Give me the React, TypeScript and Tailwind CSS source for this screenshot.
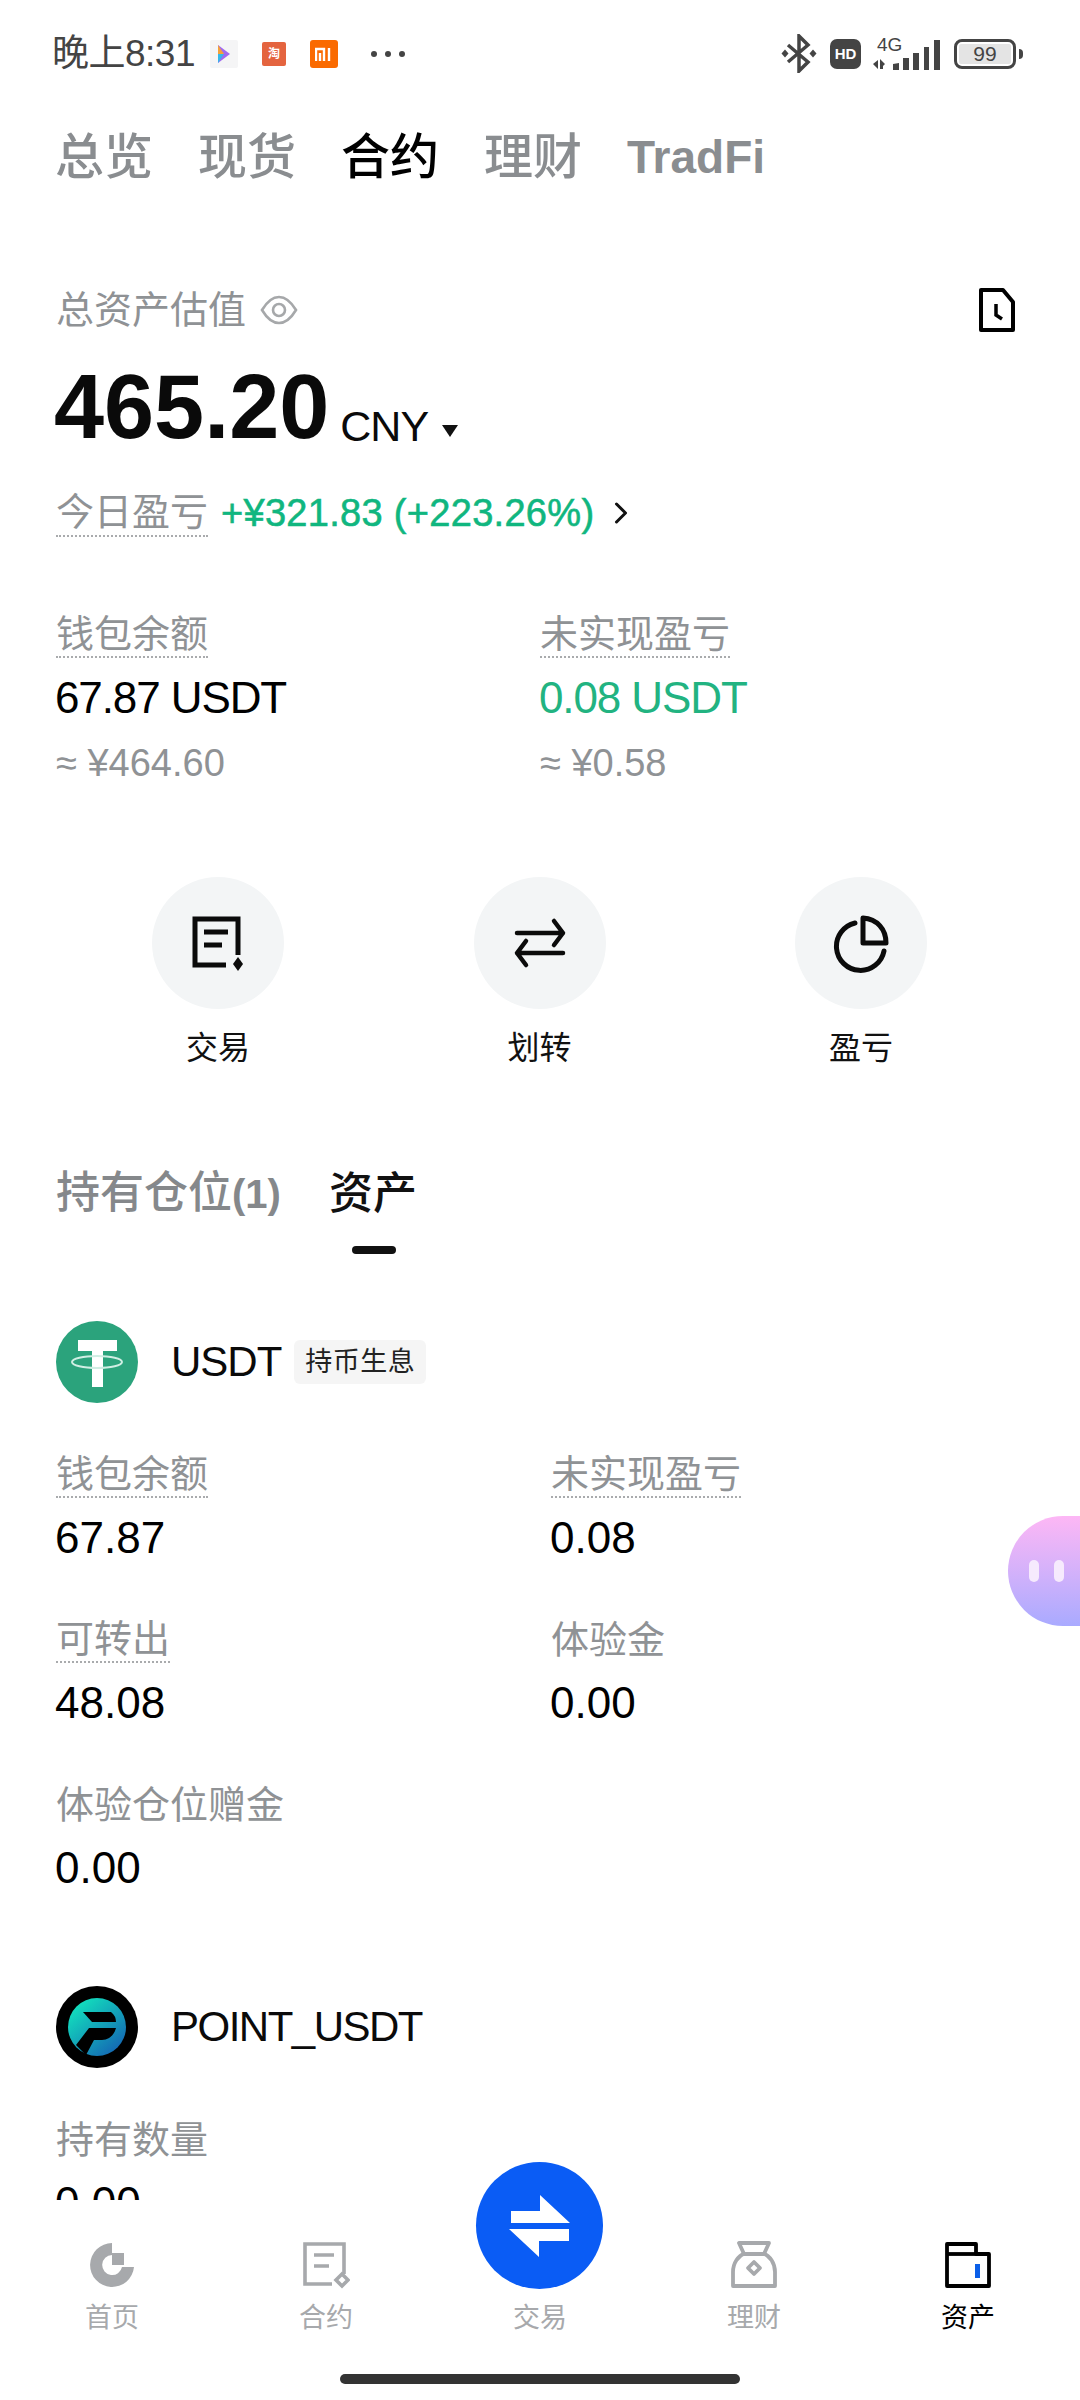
import React from 'react';
import { ChevronRight } from 'lucide-react';

const font = { fontFamily: '"Liberation Sans", "Noto Sans CJK SC", sans-serif' };

const Label: React.FC<{ text: string; dotted?: boolean }> = ({ text, dotted }) => (
  <div className="flex h-[46px] items-center">
    <span className={`text-[38px] leading-[44px] text-[#8f9295] ${dotted ? 'border-b-2 border-dotted border-[#a9abad]' : ''}`}>{text}</span>
  </div>
);

const Cell: React.FC<{ label: string; value: string; dotted?: boolean }> = ({ label, value, dotted }) => (
  <div className="h-[165px]">
    <Label text={label} dotted={dotted} />
    <div className="-ml-[1px] mt-[15px] text-[44px] leading-[50px] text-black">{value}</div>
  </div>
);

const Eye = () => (
  <svg width="38" height="30" viewBox="0 0 38 30" fill="none" stroke="#a6a8aa" strokeWidth="2.6">
    <path d="M2 15C8 5 14 2 19 2s11 3 17 13c-6 10-12 13-17 13S8 25 2 15Z" />
    <circle cx="19" cy="15" r="6" />
  </svg>
);

const TradeIcon = () => (
  <svg width="60" height="60" viewBox="0 0 60 60" fill="none">
    <path d="M38 52H7V6h43v36" stroke="#0b0b0b" strokeWidth="5" />
    <path d="M16 19h24M16 32h18" stroke="#0b0b0b" strokeWidth="5" />
    <path d="M50 44l5 7-5 7-5-7z" fill="#0b0b0b" />
  </svg>
);

const TransferIcon = () => (
  <svg width="60" height="60" viewBox="0 0 60 60" fill="none" stroke="#0b0b0b" strokeWidth="4.5" strokeLinecap="round" strokeLinejoin="round">
    <path d="M7 20h46l-9-12M53 20l-9 12" />
    <path d="M53 40H7l9-12M7 40l9 12" />
  </svg>
);

const PieIcon = () => (
  <svg width="60" height="60" viewBox="0 0 60 60" fill="none" stroke="#0b0b0b" strokeWidth="5">
    <path d="M24 10a24 24 0 1 0 29 28" strokeLinecap="round" />
    <path d="M32 5v25h23C55 16 46 6 32 5Z" strokeLinejoin="round" />
  </svg>
);

const Action: React.FC<{ label: string; children: React.ReactNode }> = ({ label, children }) => (
  <div className="flex w-[132px] flex-col items-center">
    <div className="flex h-[132px] w-[132px] items-center justify-center rounded-full bg-[#f3f5f6]">{children}</div>
    <div className="mt-[17px] whitespace-nowrap text-[32px] leading-[44px] text-[#111]">{label}</div>
  </div>
);

const Tether = () => (
  <svg width="82" height="82" viewBox="0 0 82 82" className="shrink-0">
    <circle cx="41" cy="41" r="41" fill="#2ba37c" />
    <path d="M22 19h39v11H47v36H36V30H22z" fill="#fff" />
    <ellipse cx="41" cy="41" rx="25" ry="6" fill="none" stroke="#cfeee3" strokeWidth="2" />
  </svg>
);

const PointLogo = () => (
  <svg width="82" height="82" viewBox="0 0 82 82" className="shrink-0">
    <defs>
      <linearGradient id="pt" x1="0.150" y1="0.100" x2="0.850" y2="0.900">
        <stop offset="0" stopColor="#12e0bd" />
        <stop offset="1" stopColor="#1469b4" />
      </linearGradient>
    </defs>
    <circle cx="41" cy="41" r="41" fill="#000" />
    <circle cx="41" cy="41" r="29" fill="url(#pt)" />
    <path d="M27 26h28q5 4 5 10H36z" fill="#000" />
    <path d="M20 59l13-17h27c-2 8-8 12-14 12h-8l-8 15z" fill="#000" />
  </svg>
);

const HomeIcon = () => (
  <svg width="48" height="48" viewBox="0 0 48 48">
    <path d="M24 2v12a10 10 0 1 0 10 12h12A22 22 0 1 1 24 2Z" fill="#a7a9ac" />
    <rect x="24" y="12" width="12" height="12" fill="#a7a9ac" />
  </svg>
);

const ContractIcon = () => (
  <svg width="48" height="48" viewBox="0 0 48 48" fill="none" stroke="#a7a9ac" strokeWidth="3.600">
    <path d="M30 43H3V3h39v30" />
    <path d="M12 14h20M12 25h15" />
    <path d="M40 34l6 6-6 6-6-6z" transform="translate(0 -1)" />
  </svg>
);

const EarnIcon = () => (
  <svg width="48" height="48" viewBox="0 0 48 48" fill="none" stroke="#a7a9ac" strokeWidth="3.800" strokeLinejoin="round">
    <path d="M9 2h30l-5 11H14z" />
    <path d="M15 12C8 15 3 22 3 31v14h42V31c0-9-5-16-12-19" />
    <path d="M24 21l6 6-6 6-6-6z" />
  </svg>
);

const WalletIcon = () => (
  <svg width="46" height="46" viewBox="0 0 46 46" fill="none">
    <path d="M2 44V2h29v10h13v32z" stroke="#000" strokeWidth="3.800" strokeLinejoin="round" />
    <path d="M2 12h29" stroke="#000" strokeWidth="3.800" />
    <rect x="30" y="22" width="5" height="14" fill="#0b5fe8" />
  </svg>
);

const NavItem: React.FC<{ label: string; active?: boolean; children?: React.ReactNode }> = ({ label, active, children }) => (
  <div className="flex w-[214px] flex-col items-center">
    <div className="flex h-[48px] items-center justify-center">{children}</div>
    <div className={`mt-[11px] text-[27px] leading-[36px] ${active ? 'text-black' : 'text-[#a7a9ac]'}`}>{label}</div>
  </div>
);

const StatusBar = () => (
  <div className="flex h-[106px] items-center justify-between pl-[52px] pr-[57px] pt-[1px]">
    <div className="flex items-center">
      <span className="text-[37px] leading-[44px] tracking-[-0.5px] text-[#444]">晚上8:31</span>
      <svg width="28" height="28" viewBox="0 0 28 28" className="ml-[15px]">
        <rect width="28" height="28" rx="2" fill="#f5f5f6" />
        <path d="M8 5l12 9-12 9z" fill="#a06af0" />
        <path d="M8 5l6 9H8z" fill="#f5a13a" />
        <path d="M8 14h6l-6 9z" fill="#35b8e8" />
      </svg>
      <span className="ml-[24px] flex h-[24px] w-[24px] items-center justify-center rounded-[2px] bg-[#e4643f] text-[12px] font-bold leading-none text-white">淘</span>
      <span className="ml-[24px] flex h-[28px] w-[28px] items-center justify-center rounded-[3px] bg-[#fa6a00]">
        <svg width="18" height="14" viewBox="0 0 18 14" fill="none" stroke="#fff" strokeWidth="2.400">
          <path d="M1 14V2h8v12M5 6v8M14 1v13" />
        </svg>
      </span>
      <span className="ml-[33px] flex gap-[8px]">
        <i className="h-[6px] w-[6px] rounded-full bg-[#444]" />
        <i className="h-[6px] w-[6px] rounded-full bg-[#444]" />
        <i className="h-[6px] w-[6px] rounded-full bg-[#444]" />
      </span>
    </div>
    <div className="flex items-center">
      <svg width="36" height="39" viewBox="0 0 36 39" fill="none" stroke="#444" strokeWidth="3.500">
        <path d="M7 11l20 17-9 9V2l9 9L7 28" />
        <path d="M4 15.500l3.500 4-3.500 4-3.500-4zM32 15.500l3.500 4-3.500 4-3.500-4z" fill="#444" stroke="none" />
      </svg>
      <span className="ml-[13px] flex h-[30px] w-[31px] items-center justify-center rounded-[7px] bg-[#444] text-[15px] font-bold leading-none text-white">HD</span>
      <div className="relative ml-[12px] h-[32px] w-[67px]">
        <span className="absolute left-[4px] top-[-2px] text-[19px] leading-[18px] text-[#444]">4G</span>
        <svg width="67" height="32" viewBox="0 0 67 32" fill="#444">
          <path d="M0 26l5-4v9zM7 21l5 5-2 2v3H7zM20 32v-6l6-1v7z" />
          <rect x="20" y="26" width="6" height="6" />
          <rect x="30" y="20" width="6" height="12" />
          <rect x="40" y="15" width="6" height="17" />
          <rect x="51" y="9" width="5" height="23" />
          <rect x="61" y="2" width="6" height="30" />
        </svg>
      </div>
      <div className="ml-[14px] flex h-[30px] w-[62px] items-center justify-center rounded-[8px] border-[3px] border-[#444] p-[2px]">
        <span className="flex h-full w-full items-center justify-center rounded-[2px] bg-[#e4e4e4] text-[21px] leading-none text-[#444]">99</span>
      </div>
      <i className="ml-[3px] h-[10px] w-[4px] rounded-r bg-[#444]" />
    </div>
  </div>
);

export default function App() {
  const tabs = ['总览', '现货', '合约', '理财'];

  return (
    <div className="relative flex h-[2400px] w-[1080px] flex-col overflow-hidden bg-white" style={font}>
      <div className="h-[2200px] overflow-hidden">
        <StatusBar />

        {/* top tabs */}
        <div className="mt-[1px] flex h-[100px] items-center gap-[45px] px-[55px]">
          {tabs.map((t) => (
            <span key={t} className={`text-[49px] font-medium leading-[56px] ${t === '合约' ? 'text-black' : 'text-[#8a8d90]'}`}>{t}</span>
          ))}
          <span className="text-[46px] font-bold leading-[56px] text-[#8a8d90]">TradFi</span>
        </div>

        {/* total */}
        <div className="mt-[80px] flex h-[46px] items-center justify-between pl-[56px] pr-[56px]">
          <div className="flex items-center gap-[14px]">
            <span className="text-[38px] leading-[44px] text-[#8f9295]">总资产估值</span>
            <Eye />
          </div>
          <svg width="38" height="44" viewBox="0 0 38 44" fill="none" stroke="#000" strokeWidth="4" className="mr-[8px]">
            <path d="M3 2h22l10 12v28H3z" strokeLinejoin="round" />
            <path d="M18 16v11l6 4" strokeWidth="3.500" />
          </svg>
        </div>
        <div className="mt-[28px] flex h-[92px] items-end pl-[54px]">
          <span className="text-[90px] font-bold leading-[92px] text-[#0a0a0a]">465.20</span>
          <span className="mb-[2px] ml-[11px] text-[43px] leading-[50px] tracking-[-1px] text-[#0a0a0a]">CNY</span>
          <svg width="16" height="12" viewBox="0 0 16 12" className="mb-[16px] ml-[14px]">
            <path d="M0 0h16L8 12z" fill="#111" />
          </svg>
        </div>
        <div className="mt-[35px] flex h-[50px] items-center pl-[56px]">
          <span className="border-b-2 border-dotted border-[#a9abad] text-[38px] leading-[46px] text-[#8f9295]">今日盈亏</span>
          <span className="ml-[13px] text-[38px] leading-[44px] tracking-[0.3px] text-[#10b67f] [-webkit-text-stroke:0.6px_#10b67f]">+¥321.83 (+223.26%)</span>
          <ChevronRight size={36} color="#111" strokeWidth={2} className="ml-[9px]" />
        </div>

        {/* balances */}
        <div className="mt-[74px] grid grid-cols-[484px_1fr] px-[56px]">
          <div>
            <Label text="钱包余额" dotted />
            <div className="-ml-[1px] mt-[15px] text-[44px] leading-[50px] tracking-[-1.1px] text-black">67.87 USDT</div>
            <div className="mt-[18px] text-[38px] leading-[44px] text-[#8f9295]">≈ ¥464.60</div>
          </div>
          <div>
            <Label text="未实现盈亏" dotted />
            <div className="-ml-[1px] mt-[15px] text-[44px] leading-[50px] tracking-[-1.1px] text-[#22b381]">0.08 USDT</div>
            <div className="mt-[18px] text-[38px] leading-[44px] text-[#8f9295]">≈ ¥0.58</div>
          </div>
        </div>

        {/* actions */}
        <div className="mt-[92px] flex justify-between pl-[152px] pr-[153px]">
          <Action label="交易"><TradeIcon /></Action>
          <Action label="划转"><TransferIcon /></Action>
          <Action label="盈亏"><PieIcon /></Action>
        </div>

        {/* position tabs */}
        <div className="mt-[95px] flex items-center pl-[56px]">
          <span className="text-[44px] font-medium leading-[56px] text-[#85888b]">持有仓位<span className="text-[40px] font-bold">(1)</span></span>
          <span className="ml-[48px] text-[44px] font-medium leading-[56px] text-[#111]">资产</span>
        </div>
        <div className="ml-[352px] mt-[24px] h-[8px] w-[44px] rounded-full bg-[#111]" />

        {/* USDT */}
        <div className="mt-[67px] flex items-center pl-[56px]">
          <Tether />
          <span className="ml-[33px] text-[42px] leading-[50px] tracking-[-1px] text-[#0a0a0a]">USDT</span>
          <span className="ml-[13px] flex h-[44px] w-[132px] items-center justify-center rounded-[6px] bg-[#f5f5f5] text-[27px] leading-none tracking-[0.5px] text-[#222]">持币生息</span>
        </div>
        <div className="mt-[49px] grid grid-cols-[495px_1fr] px-[56px]">
          <Cell label="钱包余额" value="67.87" dotted />
          <Cell label="未实现盈亏" value="0.08" dotted />
          <Cell label="可转出" value="48.08" dotted />
          <Cell label="体验金" value="0.00" />
          <Cell label="体验仓位赠金" value="0.00" />
        </div>

        {/* POINT_USDT */}
        <div className="mt-[39px] flex items-center pl-[56px]">
          <PointLogo />
          <span className="ml-[33px] text-[42px] leading-[50px] tracking-[-1.5px] text-[#0a0a0a]">POINT_USDT</span>
        </div>
        <div className="mt-[49px] px-[56px]">
          <Cell label="持有数量" value="0.00" />
        </div>
      </div>

      {/* bottom nav */}
      <div className="relative h-[200px] bg-white">
        <div className="flex pl-[5px] pt-[41px]">
          <NavItem label="首页"><HomeIcon /></NavItem>
          <NavItem label="合约"><ContractIcon /></NavItem>
          <NavItem label="交易" />
          <NavItem label="理财"><EarnIcon /></NavItem>
          <NavItem label="资产" active><WalletIcon /></NavItem>
        </div>
        <div className="mx-auto mt-[38px] h-[10px] w-[400px] rounded-full bg-[#333]" />
        <div className="absolute left-[476px] top-[-38px] flex h-[127px] w-[127px] items-center justify-center rounded-full bg-[#0a5cf5]">
          <svg width="64" height="62" viewBox="0 0 64 62" fill="#fff">
            <path d="M3 17h29V1l30 28H3z" transform="translate(0 -1)" />
            <path d="M61 33H1l30 28V45h30z" transform="translate(0 1)" />
          </svg>
        </div>
      </div>

      {/* floating assistant */}
      <div className="absolute left-[1008px] top-[1516px] flex h-[110px] w-[72px] items-center gap-[15px] rounded-l-full bg-gradient-to-b from-[#fdb7f5] to-[#a9aaff] pl-[21px]">
        <i className="h-[22px] w-[10px] rounded-full bg-[#f6eafd]" />
        <i className="h-[22px] w-[10px] rounded-full bg-[#f6eafd]" />
      </div>
    </div>
  );
}
